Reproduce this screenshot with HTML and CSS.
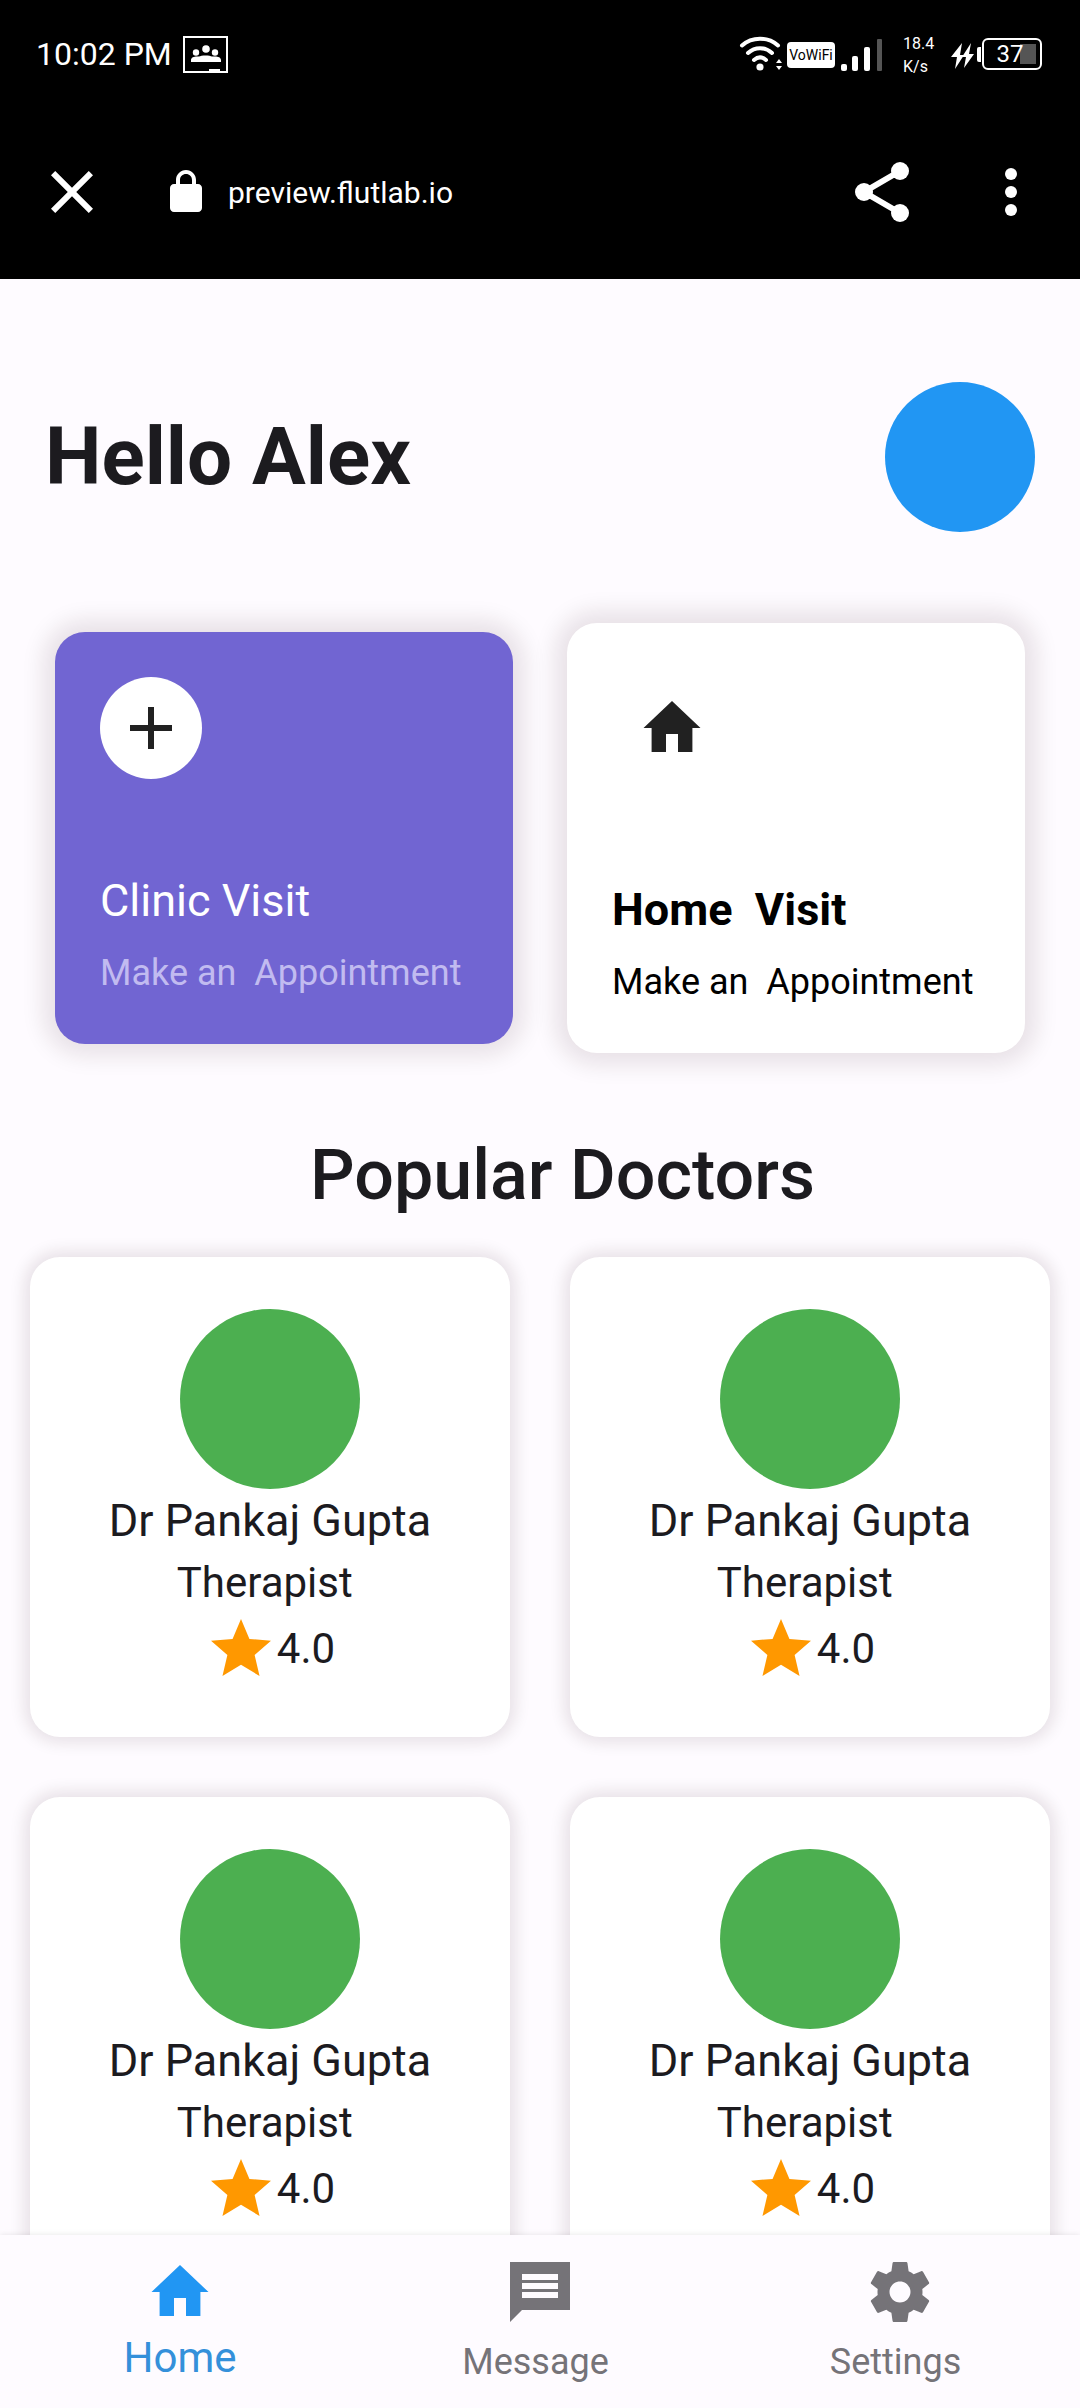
FILE: index.html
```html
<!DOCTYPE html>
<html lang="en">
<head>
<meta charset="utf-8">
<meta name="viewport" content="width=device-width, initial-scale=1">
<title>Doctor Appointments</title>
<link rel="stylesheet" href="styles.css">
</head>
<body>
<svg class="sprite" aria-hidden="true">
  <symbol id="home" viewBox="0 0 24 24"><path d="M10 20v-6h4v6h4.800v-8h2.700L12 3 2.500 12h2.700v8z"/></symbol>
  <symbol id="star" viewBox="0 0 24 24"><path d="M12 17.270 18.180 21l-1.640-7.030L22 9.240l-7.190-.61L12 2 9.190 8.630 2 9.240l5.460 4.730L5.820 21z"/></symbol>
</svg>

<div class="app">
  <div class="status">
    <div class="status-group">
      <span class="clock">10:02 PM</span>
      <svg width="46" height="37" viewBox="0 0 46 37" aria-hidden="true">
        <rect x="1" y="1" width="43" height="35" fill="none" stroke="#fff" stroke-width="2"/>
        <path d="M26 33h11v3H26z"/>
        <circle cx="23" cy="13" r="3.800"/><circle cx="13" cy="16.500" r="3.200"/><circle cx="32" cy="16.500" r="3.200"/>
        <path d="M8 26v-2c0-2.500 3-3.500 6-3.500h2c2-1.500 11-1.500 13 0h3c3 0 6 1 6 3.500v2z"/>
      </svg>
    </div>
    <div class="status-group">
      <svg width="44" height="36" viewBox="0 0 44 36" aria-hidden="true">
        <g fill="none" stroke="#fff" stroke-width="4" stroke-linecap="round"><path d="M3 9.500C13 .5 29 .5 39 9.500M9 17c7-6.500 17-6.500 24 0M15 24c4-3.500 8-3.500 12 0"/></g>
        <circle cx="21" cy="31" r="3.600"/>
        <path d="M40 23l3 4h-6zM40 34l3-4h-6z"/>
      </svg>
      <span class="vowifi">VoWiFi</span>
      <svg class="signal" width="42" height="34" viewBox="0 0 42 34" aria-hidden="true">
        <rect y="26" width="6" height="7" rx="2"/><rect x="11" y="18" width="6" height="15" rx="2"/><rect x="23" y="9" width="6" height="24" rx="2"/>
        <rect x="36" y="1" width="5" height="32" rx="1" fill="#555"/>
      </svg>
      <span class="speed">18.4<br>K/s</span>
      <svg class="bolt" width="24" height="26" viewBox="0 0 24 26" aria-hidden="true"><path d="M11 0 0 14h6L4 26l9-14H9zM20 0 11 14h4l-2 11 10-14h-5z"/></svg>
      <span class="battery"><span class="battery-level">37</span></span>
    </div>
  </div>

  <div class="browser-bar">
    <button class="icon-button" type="button" aria-label="Close"><svg viewBox="0 0 24 24"><path d="M19 6.410 17.590 5 12 10.590 6.410 5 5 6.410 10.590 12 5 17.590 6.410 19 12 13.410 17.590 19 19 17.590 13.410 12z"/></svg></button>
    <div class="address">
      <svg class="lock" viewBox="0 0 24 24" aria-hidden="true"><path d="M18 8h-1V6c0-2.760-2.240-5-5-5S7 3.240 7 6v2H6c-1.100 0-2 .9-2 2v10c0 1.100.9 2 2 2h12c1.100 0 2-.9 2-2V10c0-1.100-.9-2-2-2zM9 8V6c0-1.710 1.290-3 3-3s3 1.290 3 3v2z"/></svg>
      <span>preview.flutlab.io</span>
    </div>
    <button class="icon-button" type="button" aria-label="Share"><svg viewBox="0 0 24 24"><g fill="none" stroke="#fff" stroke-width="2"><path d="M18 5 6 12l12 7"/></g><circle cx="18" cy="5" r="3"/><circle cx="6" cy="12" r="3"/><circle cx="18" cy="19" r="3"/></svg></button>
    <button class="icon-button more" type="button" aria-label="More"><svg viewBox="0 0 24 24"><circle cx="12" cy="6" r="2"/><circle cx="12" cy="12" r="2"/><circle cx="12" cy="18" r="2"/></svg></button>
  </div>

  <main class="content">
    <header class="greeting">
      <h1>Hello Alex</h1>
      <span class="profile"></span>
    </header>

    <section class="visits">
      <a class="visit clinic" href="#clinic">
        <span class="visit-icon"><svg viewBox="0 0 24 24"><path d="M19 13h-6v6h-2v-6H5v-2h6V5h2v6h6z"/></svg></span>
        <span class="visit-title">Clinic Visit</span>
        <span class="visit-note">Make an  Appointment</span>
      </a>
      <a class="visit house" href="#home-visit">
        <span class="visit-icon"><svg><use href="#home"/></svg></span>
        <span class="visit-title">Home  Visit</span>
        <span class="visit-note">Make an  Appointment</span>
      </a>
    </section>

    <h2>Popular Doctors</h2>

    <section class="doctors">
      <article class="doctor">
        <span class="photo"></span>
        <h3>Dr Pankaj Gupta</h3>
        <p class="role">Therapist </p>
        <p class="rating"><svg><use href="#star"/></svg>4.0</p>
      </article>
      <article class="doctor">
        <span class="photo"></span>
        <h3>Dr Pankaj Gupta</h3>
        <p class="role">Therapist </p>
        <p class="rating"><svg><use href="#star"/></svg>4.0</p>
      </article>
      <article class="doctor">
        <span class="photo"></span>
        <h3>Dr Pankaj Gupta</h3>
        <p class="role">Therapist </p>
        <p class="rating"><svg><use href="#star"/></svg>4.0</p>
      </article>
      <article class="doctor">
        <span class="photo"></span>
        <h3>Dr Pankaj Gupta</h3>
        <p class="role">Therapist </p>
        <p class="rating"><svg><use href="#star"/></svg>4.0</p>
      </article>
    </section>
  </main>

  <nav class="tabs">
    <a class="tab active" href="#home-tab"><svg><use href="#home"/></svg><span>Home</span></a>
    <a class="tab" href="#message"><svg viewBox="0 0 24 24"><path d="M2 2v20l4-4h16V2zm16 12H6v-2h12zm0-3H6V9h12zm0-3H6V6h12z"/></svg><span>Message </span></a>
    <a class="tab" href="#settings"><svg viewBox="0 0 24 24"><path d="M19.430 12.980c.04-.32.070-.64.070-.98s-.03-.66-.07-.98l2.110-1.650c.19-.15.24-.42.12-.64l-2-3.460c-.12-.22-.39-.3-.61-.22l-2.490 1c-.52-.4-1.080-.73-1.690-.98l-.38-2.650C14.460 2.180 14.250 2 14 2h-4c-.25 0-.46.180-.49.420l-.38 2.650c-.61.250-1.170.590-1.690.980l-2.490-1c-.23-.09-.49 0-.61.220l-2 3.460c-.13.220-.07.490.12.640l2.110 1.650c-.04.320-.07.650-.07.980s.03.660.07.980l-2.110 1.650c-.19.150-.24.420-.12.640l2 3.460c.12.220.39.300.61.220l2.490-1c.52.400 1.080.730 1.690.980l.38 2.650c.03.240.24.420.49.420h4c.25 0 .46-.18.490-.42l.38-2.650c.61-.25 1.170-.59 1.690-.98l2.490 1c.23.090.49 0 .61-.22l2-3.460c.12-.22.070-.49-.12-.64zM12 15.500c-1.930 0-3.500-1.570-3.500-3.500s1.570-3.500 3.500-3.500 3.500 1.570 3.500 3.500-1.570 3.500-3.500 3.500z"/></svg><span>Settings </span></a>
  </nav>
</div>
</body>
</html>
```
FILE: styles.css
```css
* {
  box-sizing: border-box;
  margin: 0;
}

body {
  background: #fefbff;
  color: #1c1b1f;
  font-family: Roboto, "Liberation Sans", sans-serif;
}

svg {
  display: block;
  fill: currentColor;
  flex: none;
}

a {
  color: inherit;
  text-decoration: none;
}

.sprite {
  position: absolute;
  width: 0;
  height: 0;
}

.app {
  display: flex;
  flex-direction: column;
  height: 100vh;
}

/* System status bar */
.status {
  display: flex;
  justify-content: space-between;
  flex: none;
  height: 105px;
  padding: 36px 38px 0 36px;
  background: #000;
  color: #fff;
}

.status-group {
  display: flex;
  align-items: flex-start;
}

.clock {
  min-width: 147px;
  font-size: 32px;
  line-height: 36px;
}

.vowifi {
  width: 48px;
  height: 26px;
  margin: 6px 6px 0 4px;
  border-radius: 4px;
  background: #fff;
  color: #000;
  font-size: 14px;
  line-height: 27px;
  text-align: center;
}

.signal {
  margin: 2px 20px 0 0;
}

.speed {
  width: 32px;
  margin-top: -4px;
  font-size: 16px;
  line-height: 23px;
  white-space: nowrap;
}

.bolt {
  margin: 7px 2px 0 16px;
}

.battery {
  display: flex;
  align-items: center;
  margin-top: 2px;
}

.battery::before {
  content: "";
  width: 4px;
  height: 15px;
  margin-right: 1px;
  border-radius: 2px 0 0 2px;
  background: #fff;
}

.battery-level {
  width: 60px;
  height: 32px;
  border: 2px solid #fff;
  border-radius: 6px;
  background: linear-gradient(#555, #555) 36px 4px / 16px 20px no-repeat;
  font-size: 24px;
  line-height: 29px;
  text-align: center;
  padding-right: 4px;
}

/* Browser toolbar */
.browser-bar {
  display: flex;
  align-items: center;
  flex: none;
  height: 174px;
  padding: 0 33px 0 36px;
  background: #000;
  color: #fff;
}

.icon-button {
  width: 72px;
  height: 72px;
  padding: 0;
  border: 0;
  background: none;
  color: inherit;
}

.more {
  margin-left: 57px;
}

.address {
  display: flex;
  align-items: center;
  flex: 1;
  gap: 18px;
  margin-left: 54px;
  font-size: 30px;
}

.lock {
  width: 48px;
  height: 48px;
}

/* Page */
.content {
  flex: 1;
  min-height: 0;
  overflow-y: auto;
  scrollbar-width: none;
}

.greeting {
  display: flex;
  align-items: center;
  justify-content: space-between;
  padding: 103px 45px 91px;
}

h1 {
  font-size: 80px;
  font-weight: 700;
  line-height: 112px;
}

.profile {
  width: 150px;
  height: 150px;
  border-radius: 50%;
  background: #2196f3;
}

.visits {
  display: grid;
  grid-template-columns: 1fr 1fr;
  align-items: center;
  gap: 54px;
  padding: 0 55px;
}

.visit {
  display: flex;
  flex-direction: column;
  padding: 45px;
  border-radius: 30px;
  background: #fff;
  color: #000;
  box-shadow: 0 0 22px 12px rgba(40, 0, 20, 0.1);
  white-space: pre;
}

.visit-icon {
  width: 102px;
  height: 102px;
  margin-bottom: 90px;
  padding: 15px;
  border-radius: 50%;
  background: #fff;
  color: #212121;
}

.visit-icon svg {
  width: 72px;
  height: 72px;
}

.visit-title {
  margin-bottom: 15px;
  font-size: 45px;
  line-height: 64px;
}

.visit-note {
  font-size: 36px;
  line-height: 51px;
}

.clinic {
  background: #7165d2;
  color: #fff;
}

.clinic .visit-note {
  color: #c1bbf0;
}

.house .visit-icon {
  width: 120px;
  height: 120px;
  padding: 24px;
}

.house .visit-title {
  font-weight: 700;
}

h2 {
  margin: 73px 0 32px;
  padding-left: 45px;
  font-size: 70px;
  font-weight: 500;
  line-height: 99px;
  text-align: center;
}

.doctors {
  display: grid;
  grid-template-columns: 1fr 1fr;
  gap: 60px;
  padding: 0 30px 30px;
}

.doctor {
  display: flex;
  flex-direction: column;
  align-items: center;
  padding: 52px 30px;
  border-radius: 30px;
  background: #fff;
  box-shadow: 0 0 15px 6px rgba(40, 0, 20, 0.1);
}

.photo {
  width: 180px;
  height: 180px;
  border-radius: 50%;
  background: #4caf50;
}

h3 {
  font-size: 45px;
  font-weight: 400;
  line-height: 64px;
}

.role,
.rating {
  font-size: 42px;
  line-height: 60px;
}

.role {
  white-space: pre;
}

.rating {
  display: flex;
  align-items: center;
}

.rating svg {
  width: 72px;
  height: 72px;
  color: #ff9800;
}

/* Bottom navigation */
.tabs {
  display: grid;
  grid-template-columns: repeat(3, 1fr);
  flex: none;
  padding: 21px 0 12px;
  background: #fefbff;
  box-shadow: 0 0 6px rgba(0, 0, 0, 0.1);
  position: relative;
}

.tab {
  display: flex;
  flex-direction: column;
  align-items: center;
  color: #757378;
  font-size: 36px;
  line-height: 68px;
  white-space: pre;
}

.tab svg {
  width: 72px;
  height: 72px;
}

.tab.active {
  color: #2196f3;
  font-size: 42px;
  line-height: 60px;
}

.tab.active span {
  color: #3490da;
}
```
